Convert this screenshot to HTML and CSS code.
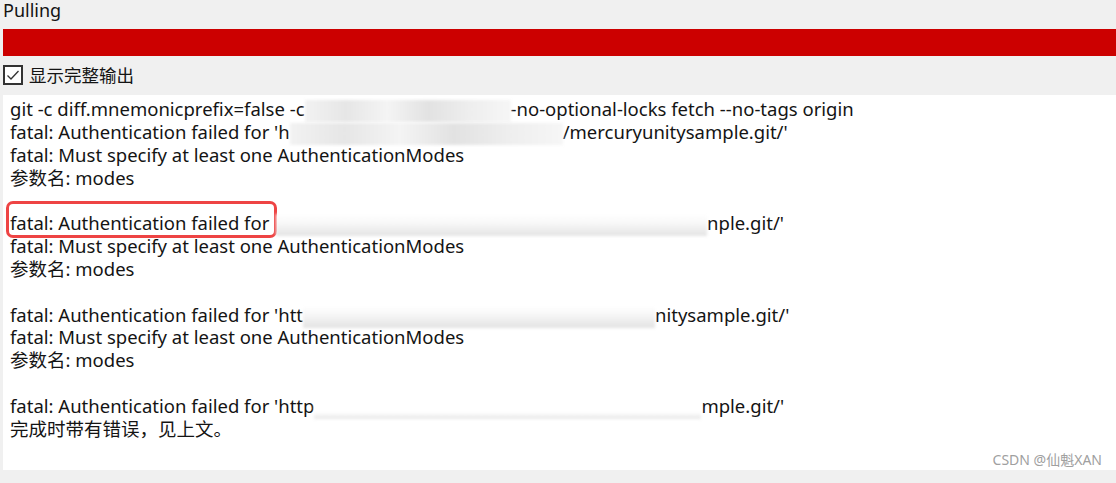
FILE: index.html
```html
<!DOCTYPE html>
<html lang="zh-CN">
<head>
    <meta charset="UTF-8">
    <title>Pulling</title>
    <link rel="stylesheet" href="styles.css">
</head>
<body>
    <div class="window">
        <div class="title">Pulling</div>
        <div class="progress"></div>

        <label class="option">
            <span class="check">
                <svg viewBox="0 0 16 16" width="16" height="16"><path d="M2.5 8.5 L6 12 L13.5 4" fill="none" stroke="#333" stroke-width="1.3"/></svg>
            </span>
            <span>显示完整输出</span>
        </label>

        <div class="log">
            <div class="line">git -c diff.mnemonicprefix=false -c<span class="smudge s1"></span>-no-optional-locks fetch --no-tags origin</div>
            <div class="line">fatal: Authentication failed for 'h<span class="smudge s2"></span>/mercuryunitysample.git/'</div>
            <div class="line">fatal: Must specify at least one AuthenticationModes</div>
            <div class="line">参数名: modes</div>
            <div class="line">&nbsp;</div>
            <div class="line"><span class="mark">fatal: Authentication failed for</span> <span class="tick"></span><span class="smudge s3"></span>nple.git/'</div>
            <div class="line">fatal: Must specify at least one AuthenticationModes</div>
            <div class="line">参数名: modes</div>
            <div class="line">&nbsp;</div>
            <div class="line">fatal: Authentication failed for 'htt<span class="smudge s4"></span>nitysample.git/'</div>
            <div class="line">fatal: Must specify at least one AuthenticationModes</div>
            <div class="line">参数名: modes</div>
            <div class="line">&nbsp;</div>
            <div class="line">fatal: Authentication failed for 'http<span class="smudge s5"></span>mple.git/'</div>
            <div class="line">完成时带有错误，见上文。</div>
            <div class="watermark">CSDN @仙魁XAN</div>
        </div>
    </div>
</body>
</html>
```

FILE: styles.css
```css
* {
    margin: 0;
    padding: 0;
    box-sizing: border-box;
}

body {
    background: #f0f0f0;
    font-family: "Noto Sans", "Noto Sans CJK SC", sans-serif;
    color: #141414;
    overflow: hidden;
}

.window {
    padding-left: 3px;
    height: 483px;
}

.title {
    height: 29px;
    font-size: 18px;
    line-height: 20px;
}

.progress {
    height: 27px;
    background: #cc0000;
}

.option {
    display: flex;
    align-items: center;
    gap: 6px;
    height: 39px;
    font-size: 17.5px;
    padding-bottom: 2px;
}

.check {
    width: 20px;
    height: 20px;
    border: 2px solid #333;
    background: #fff;
    display: flex;
    align-items: center;
    justify-content: center;
}

.log {
    position: relative;
    background: #fff;
    height: 375px;
    padding: 3px 7px;
    font-size: 18.5px;
    line-height: 22.85px;
}

.line {
    white-space: pre;
    height: 22.85px;
}

.smudge {
    display: inline-block;
    height: 22px;
    vertical-align: -6px;
    background: linear-gradient(90deg, #f2f2f2, #e6e6e6 20%, #f4f4f4 40%, #e2e2e2 60%, #eeeeee 80%, #f6f6f6);
    filter: blur(1.5px);
}

.s1 { width: 206px; }
.s2 { width: 273px; }
.s3 { width: 431px; background: linear-gradient(180deg, #ffffff 0%, #f8f8f8 40%, #e4e4e4 100%); }
.s4 { width: 352px; background: linear-gradient(180deg, #ffffff 0%, #f6f6f6 40%, #e2e2e2 100%); }
.s5 { width: 387px; background: linear-gradient(180deg, #ffffff 0%, #ffffff 70%, #e6e6e6 100%); }

.tick {
    display: inline-block;
    width: 2px;
    height: 14px;
    background: #e0a070;
    vertical-align: -2px;
}

.mark {
    position: relative;
}

.mark::after {
    content: "";
    position: absolute;
    left: -4px;
    right: -8px;
    top: -9px;
    bottom: -3px;
    border: 3px solid #ee4444;
    border-radius: 7px;
}

.watermark {
    position: absolute;
    right: 14px;
    bottom: 2px;
    font-size: 14px;
    line-height: 16px;
    color: #a0a0a0;
}
```
